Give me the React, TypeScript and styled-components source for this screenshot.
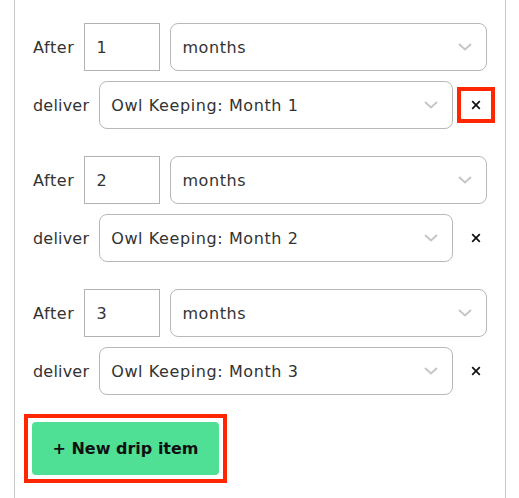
import styled, { createGlobalStyle } from "styled-components";

const GlobalStyle = createGlobalStyle`
  html, body {
    margin: 0;
    padding: 0;
    background: #ffffff;
  }
  body {
    font-family: "DejaVu Sans", "Liberation Sans", sans-serif;
    color: #333333;
  }
`;

const items = [1, 2, 3];

function Chevron() {
  return (
    <ChevronIcon viewBox="0 0 14 8" aria-hidden>
      <path d="M1 1l6 5.5L13 1" />
    </ChevronIcon>
  );
}

function CloseGlyph() {
  return (
    <svg width="10" height="10" viewBox="0 0 10 10" aria-hidden>
      <path d="M1.2 1.2l7.6 7.6M8.8 1.2l-7.6 7.6" stroke="#111" strokeWidth="1.7" />
    </svg>
  );
}

function DripItem({ month, highlighted }: { month: number; highlighted: boolean }) {
  return (
    <Group>
      <Row>
        <Label $wide>After</Label>
        <NumberBox>{month}</NumberBox>
        <Select>
          <span>months</span>
          <Chevron />
        </Select>
      </Row>
      <Row>
        <Label>deliver</Label>
        <Select>
          <span>Owl Keeping: Month {month}</span>
          <Chevron />
        </Select>
        <RemoveButton $highlighted={highlighted} aria-label="Remove">
          <CloseGlyph />
        </RemoveButton>
      </Row>
    </Group>
  );
}

export default function App() {
  return (
    <>
      <GlobalStyle />
      <Panel>
        <List>
          {items.map((m) => (
            <DripItem key={m} month={m} highlighted={m === 1} />
          ))}
        </List>
        <Highlight>
          <AddButton>+ New drip item</AddButton>
        </Highlight>
      </Panel>
    </>
  );
}

const Panel = styled.div`
  box-sizing: border-box;
  margin-left: 14px;
  width: 492px;
  min-height: 498px;
  border-left: 1px solid #c9c9c9;
  border-right: 1px solid #c9c9c9;
  padding: 23px 18px 0 18px;
  display: flex;
  flex-direction: column;
`;

const List = styled.div`
  display: flex;
  flex-direction: column;
  gap: 27px;
`;

const Group = styled.div`
  display: flex;
  flex-direction: column;
  gap: 10px;
`;

const Row = styled.div`
  display: flex;
  align-items: center;
  gap: 10px;
  height: 48px;
`;

const Label = styled.span<{ $wide?: boolean }>`
  font-size: 16px;
  letter-spacing: ${({ $wide }) => ($wide ? "0.6px" : "0.2px")};
  color: #333;
`;

const NumberBox = styled.div`
  box-sizing: border-box;
  width: 76px;
  height: 48px;
  border: 1px solid #b3b3b3;
  padding-left: 11px;
  display: flex;
  align-items: center;
  font-size: 16px;
  letter-spacing: 0.6px;
  color: #333;
`;

const Select = styled.div`
  box-sizing: border-box;
  flex: 1;
  height: 48px;
  border: 1px solid #b8b8b8;
  border-radius: 8px;
  padding: 0 14px 0 11px;
  display: flex;
  align-items: center;
  justify-content: space-between;
  font-size: 16px;
  letter-spacing: 0.6px;
  color: #333;
`;

const ChevronIcon = styled.svg`
  width: 14px;
  height: 8px;
  fill: none;
  stroke: #c6c6c6;
  stroke-width: 2;
`;

const RemoveButton = styled.button<{ $highlighted: boolean }>`
  box-sizing: border-box;
  width: 38px;
  height: 36px;
  margin-left: -6px;
  margin-right: -8px;
  padding: 0;
  background: transparent;
  display: flex;
  align-items: center;
  justify-content: center;
  border: 4px solid ${({ $highlighted }) => ($highlighted ? "#ff2600" : "transparent")};
`;

const Highlight = styled.div`
  align-self: flex-start;
  margin-top: 19px;
  margin-left: -9px;
  border: 4px solid #ff2600;
  padding: 4px;
  display: flex;
`;

const AddButton = styled.button`
  width: 187px;
  height: 53px;
  border: none;
  border-radius: 4px;
  background: #4fe095;
  color: #111;
  font-family: "DejaVu Sans", "Liberation Sans", sans-serif;
  font-weight: bold;
  font-size: 16px;
`;
